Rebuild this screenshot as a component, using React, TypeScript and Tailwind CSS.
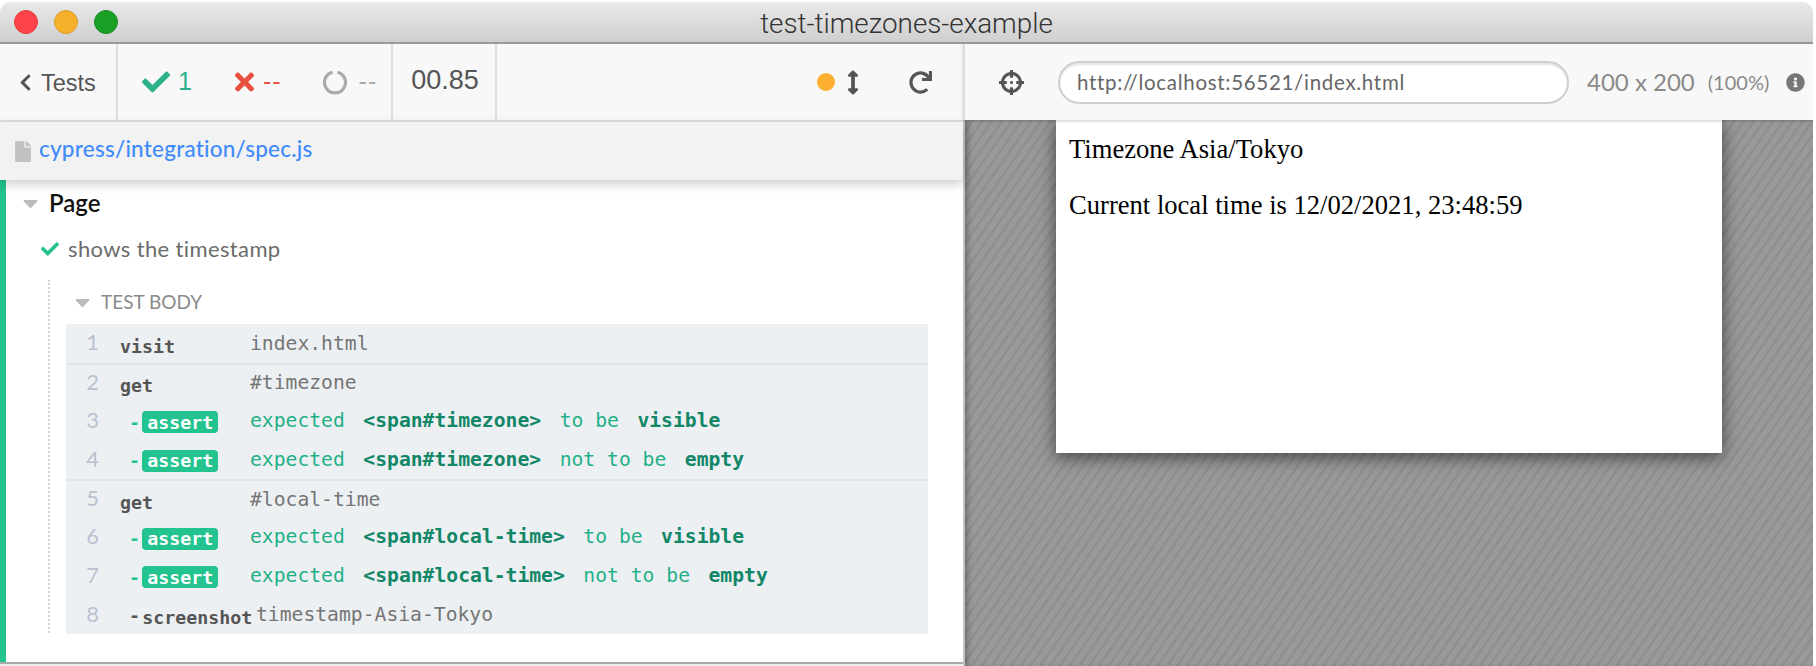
import { FaArrowsAltV, FaCaretDown, FaCheck, FaChevronLeft, FaCrosshairs, FaFile, FaInfoCircle, FaRedo, FaTimes } from 'react-icons/fa'

type Cmd = {
  method: string
  nested?: boolean
  badge?: boolean
  message: [string, boolean][]
  gray?: boolean
  divider?: boolean
}

const commands: Cmd[] = [
  { method: 'visit', gray: true, message: [['index.html', false]] },
  { method: 'get', gray: true, divider: true, message: [['#timezone', false]] },
  { method: 'assert', nested: true, badge: true, message: [['expected', false], ['<span#timezone>', true], ['to be', false], ['visible', true]] },
  { method: 'assert', nested: true, badge: true, message: [['expected', false], ['<span#timezone>', true], ['not to be', false], ['empty', true]] },
  { method: 'get', gray: true, divider: true, message: [['#local-time', false]] },
  { method: 'assert', nested: true, badge: true, message: [['expected', false], ['<span#local-time>', true], ['to be', false], ['visible', true]] },
  { method: 'assert', nested: true, badge: true, message: [['expected', false], ['<span#local-time>', true], ['not to be', false], ['empty', true]] },
  { method: 'screenshot', nested: true, gray: true, message: [['timestamp-Asia-Tokyo', false]] },
]

function CommandRow({ cmd, index }: { cmd: Cmd; index: number }) {
  return (
    <div className={`flex h-[38.75px] items-center ${cmd.divider ? 'border-t-2 border-[#e4e5e7]' : ''}`}>
      <span className="w-[33px] pb-[3px] text-right font-['Lato'] text-[22px] text-[#bcc0cf]">{index + 1}</span>
      <div className={`ml-[21px] flex shrink-0 items-center font-['DejaVu_Sans_Mono'] text-[18.3px] font-bold ${cmd.method === 'screenshot' ? 'w-[136px]' : 'w-[130px]'}`}>
        {cmd.nested && <span className={`ml-[9px] mr-[2.2px] mt-[3px] ${cmd.badge ? 'text-[#22c38e]' : 'text-[#555]'}`}>-</span>}
        {cmd.badge ? (
          <span className="mt-[3px] flex h-[22px] w-[76px] items-center justify-center rounded-[4px] bg-[#22c38e] text-white">{cmd.method}</span>
        ) : (
          <span className="mt-[6px] text-[#555]">{cmd.method}</span>
        )}
      </div>
      <div className={`flex gap-[18.5px] whitespace-nowrap font-['DejaVu_Sans_Mono'] text-[19.7px] ${cmd.gray ? 'text-[#757575]' : 'text-[#1fb088]'}`}>
        {cmd.message.map(([text, strong], i) => (
          <span key={i} className={strong ? 'font-bold text-[#128767]' : ''}>{text}</span>
        ))}
      </div>
    </div>
  )
}

export default function App() {
  return (
    <div className="h-[666px] w-[1816px] overflow-hidden bg-white pr-[3px] pt-[2px]">
      <div className="flex h-[664px] flex-col overflow-hidden rounded-t-[10px]">
        {/* Title bar */}
        <div className="relative flex h-[42px] shrink-0 items-center justify-center border-b-2 border-[#999] bg-gradient-to-b from-[#e9e9e9] to-[#cfcfcf] pt-[3px]">
          <div className="absolute left-[14px] top-[8px] flex gap-[16px]">
            <span className="h-6 w-6 rounded-full border border-[#e23c40] bg-[#fd4249]" />
            <span className="h-6 w-6 rounded-full border border-[#dd9c25] bg-[#f6b02b]" />
            <span className="h-6 w-6 rounded-full border border-[#168c20] bg-[#18a027]" />
          </div>
          <span className="font-['Roboto',sans-serif] text-[27.8px] font-light leading-none text-[#333]">test-timezones-example</span>
        </div>

        <div className="flex min-h-0 flex-1 bg-[#eee]">
          {/* Reporter */}
          <div className="mb-[2px] flex w-[963px] shrink-0 flex-col border-b-2 border-[#aaa] bg-white">
            <div className="flex h-[78px] shrink-0 border-b-2 border-[#ddd] bg-[#f8f8f8] font-['Liberation_Sans',sans-serif]">
              <div className="flex w-[118px] items-center border-r-2 border-[#ddd] pl-[19px] text-[#555]">
                <FaChevronLeft className="h-[19px] w-[13px]" />
                <span className="ml-[9px] mt-[3px] text-[23.5px] leading-none">Tests</span>
              </div>
              <div className="flex w-[275px] items-center border-r-2 border-[#ddd]">
                <FaCheck className="ml-[24px] h-[28px] w-[28px] text-[#2eb08d]" />
                <span className="ml-[8px] text-[25px] text-[#2eb08d]">1</span>
                <FaTimes className="ml-[43px] h-[28px] w-[19px] text-[#e94f3e]" />
                <span className="ml-[9px] text-[25px] tracking-[1px] text-[#e94f3e]">--</span>
                <svg viewBox="0 0 26 26" className="ml-[40px] h-[26px] w-[26px]">
                  <path d="M15.5 3.2A10.5 10.5 0 1 1 10.5 3.2" fill="none" stroke="#aaa" strokeWidth="3.2" />
                </svg>
                <span className="ml-[11px] text-[25px] tracking-[1px] text-[#aaa]">--</span>
              </div>
              <div className="flex w-[104px] items-center justify-center border-r-2 border-[#ddd] pb-[3px] pl-[2px] text-[27px] text-[#555]">00.85</div>
              <div className="flex flex-1 items-center">
                <span className="ml-[320px] h-[18px] w-[18px] rounded-full bg-[#fdb02f]" />
                <FaArrowsAltV className="ml-[12px] h-[25px] w-[12px] text-[#555]" />
                <FaRedo className="ml-[50px] h-[23px] w-[23px] text-[#555]" />
              </div>
            </div>

            <div className="relative z-10 flex h-[58px] shrink-0 items-center bg-[#f2f2f2] pl-[15px] shadow-[0_4px_10px_rgba(0,0,0,0.2)]">
              <FaFile className="h-[21px] w-[16px] text-[#c2c2c2]" />
              <span className="ml-[8px] pb-[4px] font-['Lato',sans-serif] text-[22.5px] font-medium tracking-[0.22px] text-[#3f8bfb]">cypress/integration/spec.js</span>
            </div>

            <div className="flex flex-1 border-l-[6px] border-[#22c38e]">
              <div className="flex-1">
                <div className="flex h-[46px] items-center pl-[17px]">
                  <FaCaretDown className="h-[24px] w-[15px] text-[#bbb]" />
                  <span className="ml-[11px] pb-[1px] font-['Lato',sans-serif] text-[24px] font-semibold text-[#111]">Page</span>
                </div>
                <div className="flex h-[46px] items-center pl-[34px]">
                  <FaCheck className="h-[18px] w-[20px] text-[#22c38e]" />
                  <span className="ml-[8px] pb-[2px] font-['Lato',sans-serif] text-[22px] tracking-[0.37px] text-[#6b6b6b]">shows the timestamp</span>
                </div>
                <div className="ml-[42px] mt-[8px] h-[353px] border-l-2 border-dotted border-[#d4d4d4] pr-[35px]">
                  <div className="flex h-[44px] items-center pl-[25px]">
                    <FaCaretDown className="h-[24px] w-[15px] text-[#bbb]" />
                    <span className="ml-[11px] font-['Lato',sans-serif] text-[19px] text-[#8a8a8a]">TEST BODY</span>
                  </div>
                  <div className="ml-[16px] bg-[#edf0f3]">
                    {commands.map((cmd, i) => (
                      <CommandRow key={i} cmd={cmd} index={i} />
                    ))}
                  </div>
                </div>
              </div>
            </div>
          </div>

          {/* Runner */}
          <div className="flex min-w-0 flex-1 flex-col">
            <div className="relative z-10 flex h-[76px] shrink-0 items-center border-l-2 border-[#ddd] bg-[#f8f8f8] shadow-[0_1px_3px_rgba(0,0,0,0.2)]">
              <FaCrosshairs className="ml-[34px] h-[25px] w-[25px] shrink-0 text-[#555]" />
              <div className="ml-[34px] flex h-[43px] w-[511px] shrink-0 items-center rounded-full border-2 border-[#cfcfcf] bg-white pl-[17px] pt-[1px] font-['Lato',sans-serif] text-[20.5px] tracking-[0.7px] text-[#666] shadow-[inset_0_2px_2px_rgba(0,0,0,0.1)]">
                http://localhost:56521/index.html
              </div>
              <span className="ml-[18px] shrink-0 whitespace-nowrap font-['Lato',sans-serif] text-[24px] text-[#8a8a8a]">400 x 200</span>
              <span className="ml-[13px] shrink-0 whitespace-nowrap font-['Lato',sans-serif] text-[20px] text-[#8a8a8a]">(100%)</span>
              <FaInfoCircle className="ml-[17px] h-[19px] w-[19px] shrink-0 text-[#777]" />
            </div>
            <div className="flex-1 border-l-[2px] border-[#c4c4c4] bg-[repeating-linear-gradient(125deg,#999_0,#999_5.5px,#8f8f8f_5.5px,#8f8f8f_8px)] pl-[91px] shadow-[inset_6px_0_6px_-4px_rgba(0,0,0,0.3)]">
              <div className="h-[333px] w-[666px] bg-white pl-[13px] pt-[14px] font-['Liberation_Serif',serif] text-[26.6px] leading-[31px] text-black shadow-[0_4px_16px_rgba(0,0,0,0.55)]">
                <p>Timezone Asia/Tokyo</p>
                <p className="mt-[25px]">Current local time is 12/02/2021, 23:48:59</p>
              </div>
            </div>
          </div>
        </div>
      </div>
    </div>
  )
}
